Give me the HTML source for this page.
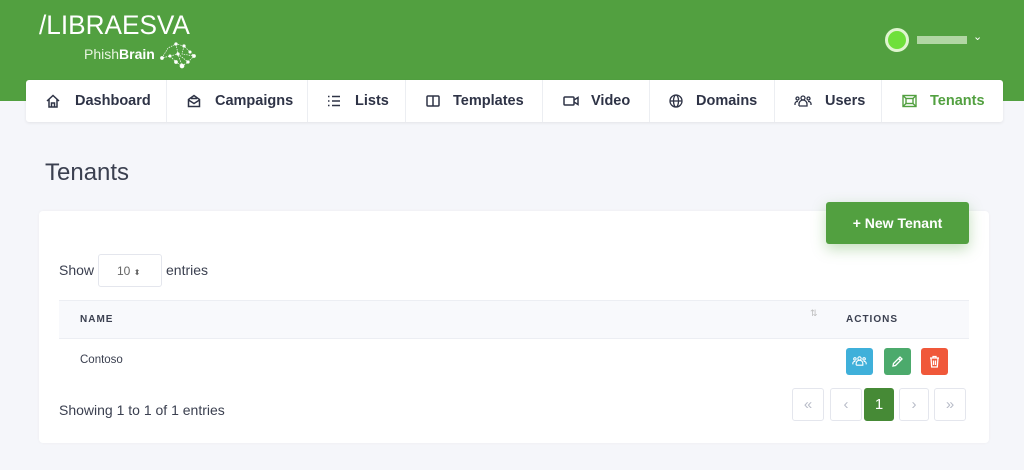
<!DOCTYPE html>
<html><head><style>
*{margin:0;padding:0;box-sizing:border-box}
body{width:1024px;height:470px;background:#f5f6fa;font-family:"Liberation Sans",sans-serif;position:relative;overflow:hidden;color:#3b4050}
.hdr{position:absolute;left:0;top:0;width:1024px;height:101px;background:#52a040}
.a{position:absolute}
.nav{position:absolute;left:26px;top:80px;width:977px;height:42px;background:#fff;border-radius:3px;box-shadow:0 1px 3px rgba(0,0,0,.08)}
.sep{position:absolute;top:0;width:1px;height:42px;background:#eceef2}
.ni{position:absolute;top:13px;font-size:14.5px;font-weight:bold;color:#2e3346}
.ic{position:absolute;top:14px}
.card{position:absolute;left:39px;top:211px;width:950px;height:232px;background:#fff;border-radius:4px;box-shadow:0 0 3px rgba(0,0,0,.04)}
.pg{position:absolute;top:388px;width:32px;height:33px;border:1px solid #e4e6ed;border-radius:3px;background:#fff;color:#b8bcc8;font-size:15px;text-align:center;line-height:31px}
.act{position:absolute;top:348px;width:27px;height:27px;border-radius:3px}
</style></head><body>
<div class="hdr"></div>
<div class="a" style="left:39px;top:10px;color:#fff;font-size:27px;transform:scaleX(.97);transform-origin:left">/LIBRAESVA</div>
<div class="a" style="left:84px;top:46px;color:#e8f5e0;font-size:14px">Phish<b style="color:#fff">Brain</b></div>
<svg class="a" style="left:160px;top:40px" width="40" height="30" viewBox="0 0 40 30" stroke="#fff" fill="#fff" stroke-width=".7">
<path d="M2 18 L8 8 L16 4 L24 6 L30 12 L34 16 L28 22 L22 26 L16 22 L10 16 L2 18 M16 4 L18 14 L28 22 M24 6 L22 14 L34 16 M10 16 L18 14 L22 26" fill="none" stroke-dasharray="1.5 1"/>
<circle cx="2" cy="18" r="1.5"/><circle cx="16" cy="4" r="1.3"/><circle cx="24" cy="6" r="1.3"/><circle cx="34" cy="16" r="1.5"/><circle cx="22" cy="26" r="2"/><circle cx="16" cy="22" r="1.5"/><circle cx="18" cy="14" r="1.3"/><circle cx="28" cy="22" r="1.3"/><circle cx="10" cy="16" r="1.2"/><circle cx="30" cy="12" r="1.2"/></svg>
<div class="a" style="left:885px;top:28px;width:24px;height:24px;border-radius:50%;background:#6ee03a;border:3px solid #dff5cf"></div>
<div class="a" style="left:917px;top:36px;width:50px;height:8px;background:#c9e3bd;opacity:.8"></div>
<div class="a" style="left:973px;top:30px;color:#fff;font-size:11px">⌄</div>
<div class="nav">
<div class="sep" style="left:140px"></div><div class="sep" style="left:281px"></div><div class="sep" style="left:379px"></div><div class="sep" style="left:516px"></div><div class="sep" style="left:623px"></div><div class="sep" style="left:748px"></div><div class="sep" style="left:855px"></div>
<svg class="ic" style="left:20px" width="14" height="14" viewBox="0 0 14 14" fill="none" stroke="#2e3346" stroke-width="1.5"><path d="M1 7L7 1.5 13 7M3 5.5V13H11V5.5M5.5 13V9H8.5V13"/></svg>
<div class="ni" style="left:49px">Dashboard</div>
<svg class="ic" style="left:161px" width="14" height="14" viewBox="0 0 14 14" fill="none" stroke="#2e3346" stroke-width="1.5"><path d="M1.5 5.5L7 1.5 12.5 5.5V12.5H1.5Z M1.5 6L7 9.5 12.5 6 M4 4.5H10"/></svg>
<div class="ni" style="left:189px">Campaigns</div>
<svg class="ic" style="left:301px" width="14" height="14" viewBox="0 0 14 14" fill="none" stroke="#2e3346" stroke-width="1.6"><path d="M1 2.5H2.5M5 2.5H13M1 7H2.5M5 7H13M1 11.5H2.5M5 11.5H13"/></svg>
<div class="ni" style="left:329px">Lists</div>
<svg class="ic" style="left:400px" width="14" height="14" viewBox="0 0 14 14" fill="none" stroke="#2e3346" stroke-width="1.5"><rect x="1" y="2" width="12" height="10" rx="1"/><path d="M7 2V12"/></svg>
<div class="ni" style="left:427px">Templates</div>
<svg class="ic" style="left:537px" width="16" height="14" viewBox="0 0 16 14" fill="none" stroke="#2e3346" stroke-width="1.5"><rect x="1" y="3" width="10" height="8" rx="1"/><path d="M11 6L15 3.5V10.5L11 8"/></svg>
<div class="ni" style="left:565px">Video</div>
<svg class="ic" style="left:643px" width="14" height="14" viewBox="0 0 14 14" fill="none" stroke="#2e3346" stroke-width="1.3"><circle cx="7" cy="7" r="6"/><ellipse cx="7" cy="7" rx="2.5" ry="6"/><path d="M1 7H13"/></svg>
<div class="ni" style="left:670px">Domains</div>
<svg class="ic" style="left:768px" width="18" height="14" viewBox="0 0 18 14" fill="none" stroke="#2e3346" stroke-width="1.3"><circle cx="9" cy="4" r="2"/><circle cx="3.5" cy="4.5" r="1.5"/><circle cx="14.5" cy="4.5" r="1.5"/><path d="M5 12V10a4 4 0 0 1 8 0v2H5M1 11V9.5a2.5 2.5 0 0 1 3-2M17 11V9.5a2.5 2.5 0 0 0-3-2"/></svg>
<div class="ni" style="left:799px">Users</div>
<svg class="ic" style="left:876px" width="15" height="14" viewBox="0 0 15 14" fill="none" stroke="#52a040" stroke-width="1.4"><rect x="1" y="1.5" width="13" height="11"/><rect x="4" y="4.5" width="7" height="5"/><path d="M1 1.5L4 4.5M14 1.5L11 4.5M1 12.5L4 9.5M14 12.5L11 9.5"/></svg>
<div class="ni" style="left:904px;color:#52a040">Tenants</div>
</div>
<div class="a" style="left:45px;top:159px;font-size:24px;color:#3b4050">Tenants</div>
<div class="card"></div>
<div class="a" style="left:826px;top:202px;width:143px;height:42px;background:#52a040;border-radius:3px;color:#fff;font-size:14px;font-weight:bold;text-align:center;line-height:43px;box-shadow:0 5px 14px rgba(82,160,64,.35)">+ New Tenant</div>
<div class="a" style="left:59px;top:262px;font-size:14px">Show</div>
<div class="a" style="left:98px;top:254px;width:64px;height:33px;border:1px solid #e4e6ed;border-radius:3px;font-size:12px;color:#666;padding:9px 0 0 18px">10 <span style="font-size:8px">⬍</span></div>
<div class="a" style="left:166px;top:262px;font-size:14px">entries</div>
<div class="a" style="left:59px;top:300px;width:910px;height:39px;background:#f8f9fc;border-top:1px solid #eceef3;border-bottom:1px solid #eceef3"></div>
<div class="a" style="left:80px;top:314px;font-size:10px;font-weight:bold;letter-spacing:1px;color:#3b4050">NAME</div>
<div class="a" style="left:810px;top:308px;font-size:9px;color:#bbb">⇅</div>
<div class="a" style="left:846px;top:314px;font-size:10px;font-weight:bold;letter-spacing:1px;color:#3b4050">ACTIONS</div>
<div class="a" style="left:80px;top:354px;font-size:11.5px;color:#3b4050">Contoso</div>
<div class="act" style="left:846px;background:#3fb0da"></div>
<svg class="a" style="left:852px;top:355px" width="15" height="12" viewBox="0 0 18 14" fill="none" stroke="#fff" stroke-width="1.3"><circle cx="9" cy="4" r="2"/><circle cx="3.5" cy="4.5" r="1.5"/><circle cx="14.5" cy="4.5" r="1.5"/><path d="M5 12V10a4 4 0 0 1 8 0v2H5M1 11V9.5a2.5 2.5 0 0 1 3-2M17 11V9.5a2.5 2.5 0 0 0-3-2"/></svg>
<div class="act" style="left:884px;background:#4caa6c"></div>
<svg class="a" style="left:891px;top:355px" width="13" height="13" viewBox="0 0 13 13" fill="none" stroke="#fff" stroke-width="1.3"><path d="M2 11L2.5 8.5 9 2 11 4 4.5 10.5Z M7.5 3.5L9.5 5.5"/></svg>
<div class="act" style="left:921px;background:#f0583a"></div>
<svg class="a" style="left:928px;top:355px" width="13" height="13" viewBox="0 0 13 13" fill="none" stroke="#fff" stroke-width="1.3"><path d="M2 3H11M5 3V1.5H8V3M3 3L3.7 12H9.3L10 3M5.5 5.5V10M7.5 5.5V10"/></svg>
<div class="a" style="left:59px;top:402px;font-size:14px">Showing 1 to 1 of 1 entries</div>
<div class="pg" style="left:792px">«</div>
<div class="pg" style="left:830px">‹</div>
<div class="pg" style="left:864px;width:30px;background:#468a36;border-color:#468a36;color:#fff">1</div>
<div class="pg" style="left:899px;width:30px">›</div>
<div class="pg" style="left:934px">»</div>
</body></html>
